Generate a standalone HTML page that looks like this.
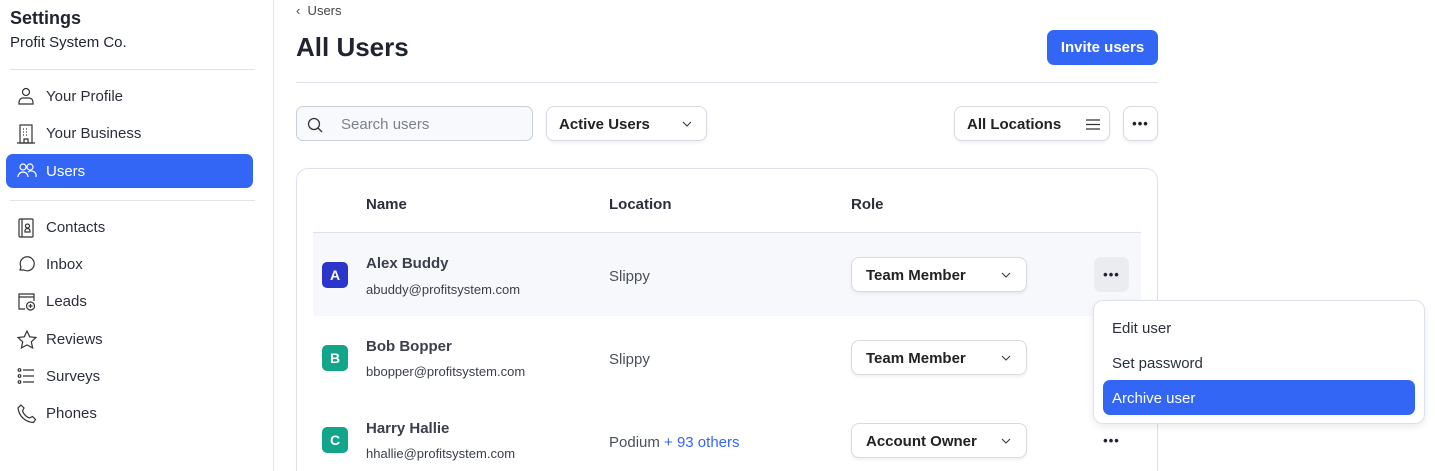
<!DOCTYPE html>
<html style="height:471px;overflow:hidden"><head><meta charset="utf-8"><style>
*{box-sizing:border-box;margin:0;padding:0}
body{width:1435px;height:471px;overflow:hidden;background:#fff;font-family:"Liberation Sans",sans-serif;color:#1f2430;position:relative}
.abs{position:absolute}
.side{left:0;top:0;width:274px;height:471px;border-right:1px solid #e3e6ec}
.nav{position:absolute;left:6px;width:247px;height:34px;display:flex;align-items:center;font-size:15px;color:#2a2f3a}
.nav svg{position:absolute;left:11px;top:8px}
.nav span{position:absolute;left:40px;top:9px}
.hr{position:absolute;height:1px;background:#e0e4ea}
.btn{position:absolute;border:1px solid #d6dae1;border-radius:8px;background:#fff;box-shadow:0 2px 3px rgba(0,0,0,.06);font-size:15px;font-weight:bold;color:#222}
.th{position:absolute;top:196px;font-size:15px;font-weight:bold;color:#2a2f3a}
.av{position:absolute;left:322px;width:26px;height:26px;border-radius:5px;color:#fff;font-size:14px;font-weight:bold;text-align:center;line-height:26px}
.nm{position:absolute;left:366px;font-size:15px;font-weight:bold;color:#3a3f4a}
.em{position:absolute;left:366px;font-size:13px;color:#3a3f4a}
.loc{position:absolute;left:609px;font-size:15px;color:#4a4f5a}
.sel{width:176px;height:35px}
.sel b{position:absolute;left:14px;top:9px}
.chev{position:absolute;right:15px;top:14px}
.dots{position:absolute;font-size:13px;font-weight:bold;letter-spacing:1px;line-height:35px;text-align:center}
</style></head><body>
<div class="abs side"></div>
<div class="abs" style="left:10px;top:8px;font-size:18px;font-weight:bold">Settings</div>
<div class="abs" style="left:10px;top:34px;font-size:15px">Profit System Co.</div>
<div class="hr" style="left:10px;top:69px;width:245px"></div>
<div class="nav" style="top:79px"><svg width="18" height="18" viewBox="0 0 18 18" fill="none" stroke="#333" stroke-width="1.2"><circle cx="9" cy="5" r="3.5"/><path d="M2 17v-2a4 4 0 0 1 4-4h6a4 4 0 0 1 4 4v2z"/></svg><span>Your Profile</span></div>
<div class="nav" style="top:116px"><svg width="18" height="20" viewBox="0 0 18 20" fill="none" stroke="#333" stroke-width="1.2"><rect x="3" y="1" width="12" height="18"/><path d="M0 19h18M7 19v-4h4v4M6 5h1M9 5h1M12 5h0M6 8h1M9 8h1M12 8h0M6 11h1M9 11h1"/></svg><span>Your Business</span></div>
<div class="nav" style="top:154px;background:#3366f5;border-radius:7px;color:#fff"><svg width="20" height="18" viewBox="0 0 20 18" fill="none" stroke="#fff" stroke-width="1.2"><circle cx="6" cy="5" r="3"/><circle cx="13" cy="5" r="3"/><path d="M1 15a5 5 0 0 1 10 0M11 10a5 5 0 0 1 8 5"/></svg><span>Users</span></div>
<div class="hr" style="left:10px;top:200px;width:245px"></div>
<div class="nav" style="top:210px"><svg width="18" height="20" viewBox="0 0 18 20" fill="none" stroke="#333" stroke-width="1.2"><rect x="2" y="1" width="14" height="18" rx="1"/><path d="M5 1v18"/><circle cx="10.5" cy="8" r="2"/><path d="M8 14h5v-1a2 2 0 0 0-5 0z"/></svg><span>Contacts</span></div>
<div class="nav" style="top:247px"><svg width="18" height="18" viewBox="0 0 18 18" fill="none" stroke="#333" stroke-width="1.2"><path d="M3 15l1-3a7 7 0 1 1 3 3z"/></svg><span>Inbox</span></div>
<div class="nav" style="top:284px"><svg width="20" height="20" viewBox="0 0 20 20" fill="none" stroke="#333" stroke-width="1.2"><path d="M8 17H2V2h15v7M2 5h15"/><circle cx="13.5" cy="14" r="4"/><path d="M13.5 12v4M11.5 14h4"/></svg><span>Leads</span></div>
<div class="nav" style="top:322px"><svg width="20" height="20" viewBox="0 0 20 20" fill="none" stroke="#333" stroke-width="1.2"><path d="M10 1l2.7 5.8 6.3.7-4.7 4.3 1.3 6.2L10 14.9 4.4 18l1.3-6.2L1 7.5l6.3-.7z"/></svg><span>Reviews</span></div>
<div class="nav" style="top:359px"><svg width="18" height="18" viewBox="0 0 18 18" fill="none" stroke="#333" stroke-width="1.2"><circle cx="2.5" cy="3" r="1.3"/><circle cx="2.5" cy="9" r="1.3"/><circle cx="2.5" cy="15" r="1.3"/><path d="M6 3h11M6 9h11M6 15h11"/></svg><span>Surveys</span></div>
<div class="nav" style="top:396px"><svg width="20" height="20" viewBox="0 0 20 20" fill="none" stroke="#333" stroke-width="1.2"><path d="M4 1l3 3-1.5 3a12 12 0 0 0 7 7l3-1.5 3 3-2 3C8 18 2 12 1 4z"/></svg><span>Phones</span></div>

<div class="abs" style="left:296px;top:3px;font-size:13px;color:#444">‹ &nbsp;Users</div>
<div class="abs" style="left:296px;top:32px;font-size:26px;font-weight:bold;color:#1f2430">All Users</div>
<div class="abs" style="left:1047px;top:30px;width:111px;height:35px;background:#3366f5;border-radius:7px;color:#fff;font-size:15px;font-weight:bold;text-align:center;line-height:35px">Invite users</div>
<div class="hr" style="left:296px;top:82px;width:862px"></div>

<div class="abs" style="left:296px;top:106px;width:237px;height:35px;border:1px solid #c9d0db;border-radius:7px;background:#f7f9fc"><svg class="abs" style="left:10px;top:10px" width="16" height="16" viewBox="0 0 16 16" fill="none" stroke="#333" stroke-width="1.3"><circle cx="7" cy="7" r="5.5"/><path d="M11 11l4 4"/></svg><span class="abs" style="left:44px;top:9px;font-size:15px;color:#7a8090">Search users</span></div>
<div class="btn" style="left:546px;top:106px;width:161px;height:35px"><span class="abs" style="left:12px;top:9px">Active Users</span><svg class="chev" style="right:14px" width="10" height="6" viewBox="0 0 10 6" fill="none" stroke="#333"><path d="M1 1l4 4 4-4"/></svg></div>
<div class="btn" style="left:954px;top:106px;width:156px;height:35px"><span class="abs" style="left:12px;top:9px">All Locations</span><svg class="abs" style="left:131px;top:12px" width="14" height="11" viewBox="0 0 14 11" stroke="#333" stroke-width="1.3"><path d="M0 1h14M0 5.5h14M0 10h14"/></svg></div>
<div class="btn" style="left:1123px;top:106px;width:35px;height:35px"><span class="dots" style="left:0;top:-1px;width:33px">•••</span></div>

<div class="abs" style="left:296px;top:168px;width:862px;height:320px;border:1px solid #dde2ea;border-radius:12px"></div>
<div class="th" style="left:366px">Name</div>
<div class="th" style="left:609px">Location</div>
<div class="th" style="left:851px">Role</div>
<div class="abs" style="left:313px;top:232px;width:828px;height:84px;background:#f7f8fc;border-top:1px solid #dde2ea"></div>

<div class="av" style="top:262px;background:#2b35c9">A</div>
<div class="nm" style="top:255px">Alex Buddy</div><div class="em" style="top:282px">abuddy@profitsystem.com</div>
<div class="loc" style="top:268px">Slippy</div>
<div class="btn sel" style="left:851px;top:257px"><b>Team Member</b><svg class="chev" width="10" height="6" viewBox="0 0 10 6" fill="none" stroke="#333"><path d="M1 1l4 4 4-4"/></svg></div>
<div class="abs" style="left:1094px;top:257px;width:35px;height:35px;background:#eaecf0;border-radius:7px"><span class="dots" style="left:0;top:0;width:35px">•••</span></div>

<div class="av" style="top:345px;background:#12a58a">B</div>
<div class="nm" style="top:338px">Bob Bopper</div><div class="em" style="top:364px">bbopper@profitsystem.com</div>
<div class="loc" style="top:351px">Slippy</div>
<div class="btn sel" style="left:851px;top:340px"><b>Team Member</b><svg class="chev" width="10" height="6" viewBox="0 0 10 6" fill="none" stroke="#333"><path d="M1 1l4 4 4-4"/></svg></div>

<div class="av" style="top:427px;background:#12a58a">C</div>
<div class="nm" style="top:420px">Harry Hallie</div><div class="em" style="top:446px">hhallie@profitsystem.com</div>
<div class="loc" style="top:434px">Podium <span style="color:#3366f5">+ 93 others</span></div>
<div class="btn sel" style="left:851px;top:423px"><b>Account Owner</b><svg class="chev" width="10" height="6" viewBox="0 0 10 6" fill="none" stroke="#333"><path d="M1 1l4 4 4-4"/></svg></div>
<span class="dots" style="left:1094px;top:423px;width:35px">•••</span>

<div class="abs" style="left:1093px;top:300px;width:332px;height:124px;background:#fff;border:1px solid #dde2ea;border-radius:10px;box-shadow:0 3px 8px rgba(0,0,0,.08)"></div>
<div class="abs" style="left:1112px;top:320px;font-size:15px;color:#2a2f3a">Edit user</div>
<div class="abs" style="left:1112px;top:355px;font-size:15px;color:#2a2f3a">Set password</div>
<div class="abs" style="left:1103px;top:380px;width:312px;height:35px;background:#3366f5;border-radius:7px;color:#fff;font-size:15px;padding:10px 0 0 9px">Archive user</div>
</body></html>
